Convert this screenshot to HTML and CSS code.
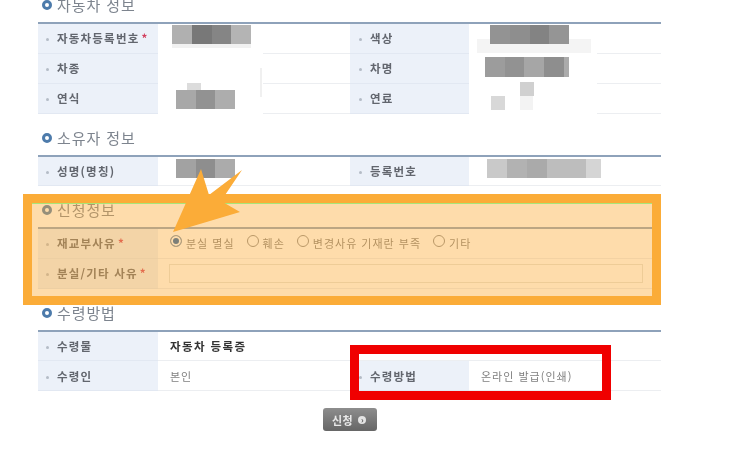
FILE: index.html
```html
<!DOCTYPE html>
<html lang="ko">
<head>
<meta charset="utf-8">
<title>자동차 등록증 재교부 신청</title>
<link rel="stylesheet" href="styles.css">
</head>
<body>
<main class="page">
  <section class="block">
    <h2 class="heading"><i class="ring"></i>자동차 정보</h2>
    <table class="info">
      <colgroup><col class="c-label"><col class="c-value"><col class="c-label2"><col class="c-value"></colgroup>
      <tr><th><i class="dot"></i>자동차등록번호<b class="req">*</b></th><td></td><th class="second"><i class="dot"></i>색상</th><td></td></tr>
      <tr><th><i class="dot"></i>차종</th><td></td><th class="second"><i class="dot"></i>차명</th><td></td></tr>
      <tr><th><i class="dot"></i>연식</th><td></td><th class="second"><i class="dot"></i>연료</th><td></td></tr>
    </table>
  </section>
  <section class="block">
    <h2 class="heading"><i class="ring"></i>소유자 정보</h2>
    <table class="info">
      <colgroup><col class="c-label"><col class="c-value"><col class="c-label2"><col class="c-value"></colgroup>
      <tr><th><i class="dot"></i>성명(명칭)</th><td></td><th class="second"><i class="dot"></i>등록번호</th><td></td></tr>
    </table>
  </section>
  <section class="block">
    <h2 class="heading"><i class="ring"></i>신청정보</h2>
    <table class="info">
      <colgroup><col class="c-label"><col class="c-value"><col class="c-label2"><col class="c-value"></colgroup>
      <tr>
        <th><i class="dot"></i>재교부사유<b class="req">*</b></th>
        <td colspan="3">
          <div class="radios">
            <span class="radio"><i class="circle on"></i>분실 멸실</span>
            <span class="radio"><i class="circle"></i>훼손</span>
            <span class="radio"><i class="circle"></i>변경사유 기재란 부족</span>
            <span class="radio"><i class="circle"></i>기타</span>
          </div>
        </td>
      </tr>
      <tr>
        <th><i class="dot"></i>분실/기타 사유<b class="req">*</b></th>
        <td colspan="3"><input class="reason" type="text" aria-label="분실/기타 사유"></td>
      </tr>
    </table>
  </section>
  <section class="block last">
    <h2 class="heading"><i class="ring"></i>수령방법</h2>
    <table class="info">
      <colgroup><col class="c-label"><col class="c-value"><col class="c-label2"><col class="c-value"></colgroup>
      <tr><th><i class="dot"></i>수령물</th><td colspan="3" class="strong">자동차 등록증</td></tr>
      <tr><th><i class="dot"></i>수령인</th><td>본인</td><th class="second"><i class="dot"></i>수령방법</th><td>온라인 발급(인쇄)</td></tr>
    </table>
  </section>
  <div class="actions"><button class="submit" type="button">신청<i class="go">›</i></button></div>

  <svg class="redact" viewBox="0 0 735 449" aria-hidden="true">
    <rect x="158" y="24" width="105" height="90" fill="#fff"/>
    <rect x="469" y="24" width="128" height="90" fill="#fff"/>
    <rect x="260" y="68" width="2" height="29" fill="#f0f0f0"/>
    <rect x="172" y="25" width="20" height="19" fill="#b0b0b0"/>
    <rect x="192" y="25" width="20" height="19" fill="#787878"/>
    <rect x="212" y="25" width="19" height="19" fill="#858585"/>
    <rect x="231" y="25" width="20" height="19" fill="#b4b4b4"/>
    <rect x="172" y="44" width="79" height="4" fill="#f1f1f1"/>
    <rect x="187" y="83" width="14" height="7" fill="#dcdcdc"/>
    <rect x="176" y="90" width="20" height="19" fill="#a8a8a8"/>
    <rect x="196" y="90" width="19" height="19" fill="#929292"/>
    <rect x="215" y="90" width="20" height="19" fill="#adadad"/>
    <rect x="477" y="39" width="114" height="14" fill="#f4f4f4"/>
    <rect x="490" y="25" width="20" height="19" fill="#939393"/>
    <rect x="510" y="25" width="20" height="19" fill="#8e8e8e"/>
    <rect x="530" y="25" width="19" height="19" fill="#838383"/>
    <rect x="549" y="25" width="20" height="19" fill="#959595"/>
    <rect x="485" y="57" width="20" height="20" fill="#9c9c9c"/>
    <rect x="505" y="57" width="19" height="20" fill="#929292"/>
    <rect x="524" y="57" width="20" height="20" fill="#a6a6a6"/>
    <rect x="544" y="57" width="20" height="20" fill="#8e8e8e"/>
    <rect x="564" y="57" width="5" height="20" fill="#ababab"/>
    <rect x="520" y="82" width="14" height="14" fill="#d0d0d0"/>
    <rect x="491" y="96" width="14" height="14" fill="#d8d8d8"/>
    <rect x="520" y="96" width="13" height="14" fill="#f3f3f3"/>
    <rect x="176" y="159" width="20" height="19" fill="#a2a2a2"/>
    <rect x="196" y="159" width="19" height="19" fill="#8e8e8e"/>
    <rect x="215" y="159" width="20" height="19" fill="#ababab"/>
    <rect x="487" y="159" width="20" height="19" fill="#c9c9c9"/>
    <rect x="507" y="159" width="20" height="19" fill="#b2b2b2"/>
    <rect x="527" y="159" width="20" height="19" fill="#aaaaaa"/>
    <rect x="547" y="159" width="39" height="19" fill="#bdbdbd"/>
    <rect x="586" y="159" width="15" height="19" fill="#d5d5d5"/>
  </svg>

  <div class="frame-orange"></div>
  <div class="frame-red"></div>
  <svg class="arrow" viewBox="0 0 735 449" aria-hidden="true">
    <polygon points="173,232 201,169 209,195 242,170 221,201 240,212" fill="#fbac38"/>
  </svg>
</main>
</body>
</html>
```
FILE: styles.css
```css
* { box-sizing: border-box; }
html, body { margin: 0; background: #fff; }
body { width: 735px; height: 449px; overflow: hidden; }

.page {
  position: relative;
  width: 735px;
  height: 449px;
  padding: 0 74px 0 38px;
  font-family: "Noto Sans CJK KR", "Noto Sans", sans-serif;
  color: #666;
  filter: blur(0.6px);
}

.block { margin-bottom: 19px; }
.block.last { margin-bottom: 17px; }

.heading {
  display: flex;
  align-items: flex-end;
  gap: 5px;
  height: 22px;
  margin: 0;
  padding: 0 0 9px 4px;
  font-size: 15px;
  font-weight: 400;
  line-height: 16px;
  letter-spacing: 0.9px;
  color: #7d848e;
  white-space: nowrap;
}
.ring {
  flex: none;
  width: 10px;
  height: 10px;
  margin-bottom: 3px;
  border: 3px solid #4d7bab;
  border-radius: 50%;
  background: #fff;
}

.info {
  width: 623px;
  table-layout: fixed;
  border-collapse: collapse;
  border-top: 2px solid #8ea2ba;
  font-size: 11px;
}
.c-label { width: 120px; }
.c-value { width: 192px; }
.c-label2 { width: 119px; }
.info th, .info td {
  height: 30px;
  padding: 0;
  border-bottom: 1px solid #eceef1;
  white-space: nowrap;
}
.info th {
  padding-left: 8px;
  background: #ecf1f9;
  border-bottom-color: #e2e8f2;
  color: #62666e;
  font-size: 11.5px;
  font-weight: 700;
  text-align: left;
  letter-spacing: 1.2px;
}
.info th.second { padding-left: 9px; }
.info td {
  padding-left: 12px;
  color: #808080;
  letter-spacing: 1px;
}
.info td.strong { color: #333; font-weight: 700; font-size: 11.5px; letter-spacing: 1.4px; }

.dot {
  display: inline-block;
  width: 3px;
  height: 3px;
  margin-right: 8px;
  vertical-align: 2px;
  background: #b5bcc6;
  border-radius: 50%;
}
.req { margin-left: 2px; color: #d2405f; font-weight: 700; }

.radios { display: flex; align-items: center; }
.radio { display: flex; align-items: center; gap: 4px; margin-right: 12px; }
.circle {
  flex: none;
  width: 12px;
  height: 12px;
  margin-top: -5px;
  border: 1px solid #8a8a8a;
  border-radius: 50%;
  background: #fff;
}
.circle.on {
  background: #1f5fa8;
  box-shadow: inset 0 0 0 2px #fff;
  border-color: #7f94aa;
}
.reason {
  display: block;
  width: 474px;
  height: 19px;
  margin: 0 0 0 -1px;
  padding: 0;
  border: 1px solid #e4e4dc;
  background: #fff;
}

.actions { display: flex; justify-content: center; width: 623px; }
.submit {
  display: flex;
  align-items: center;
  gap: 5px;
  width: 54px;
  height: 23px;
  margin-left: 1px;
  padding: 0 0 0 9px;
  border: 0;
  border-radius: 3px;
  background: linear-gradient(#8d8d8d, #666);
  color: #e8e8e8;
  font-family: inherit;
  font-size: 11px;
  font-weight: 700;
  letter-spacing: 0.5px;
}
.go {
  width: 8px;
  height: 8px;
  border-radius: 50%;
  background: #e4e4e4;
  color: #555;
  font-size: 8px;
  font-style: normal;
  line-height: 7px;
  text-align: center;
  letter-spacing: 0;
}

.redact, .arrow {
  position: absolute;
  left: 0;
  top: 0;
  width: 735px;
  height: 449px;
  pointer-events: none;
}
.frame-orange {
  position: absolute;
  left: 23px;
  top: 194px;
  width: 638px;
  height: 111px;
  border: 9px solid #fbac38;
  background: rgba(252, 172, 56, 0.42);
  box-shadow: inset 0 1px 0 #a8e678;
}
.frame-red {
  position: absolute;
  left: 350px;
  top: 345px;
  width: 261px;
  height: 55px;
  border: 9px solid #f00000;
}
```
